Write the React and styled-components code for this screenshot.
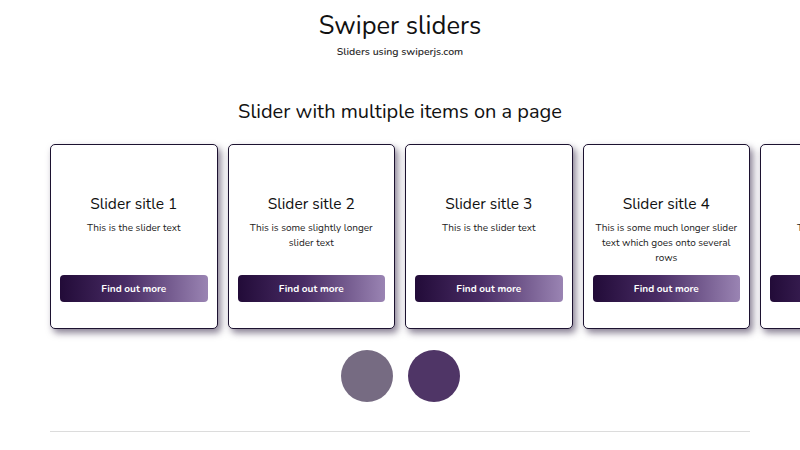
import React from 'react';
import styled, { createGlobalStyle } from 'styled-components';

const GlobalStyle = createGlobalStyle`
  html, body {
    margin: 0;
    padding: 0;
    background: #fff;
    overflow: hidden;
  }
  body {
    font-family: 'Nunito', 'Lato', 'Noto Sans', sans-serif;
    color: #111;
  }
`;

const Page = styled.div`
  width: 700px;
  margin: 0 auto;
  display: flex;
  flex-direction: column;
  align-items: center;
`;

const Title = styled.h1`
  margin: 11px 0 0;
  font-size: 25.5px;
  font-weight: 400;
  line-height: 30px;
`;

const Subtitle = styled.p`
  margin: 4px 0 0;
  font-size: 10.5px;
  font-weight: 600;
  color: #2b2b2b;
  line-height: 14px;
`;

const SectionTitle = styled.h2`
  margin: 40px 0 0;
  font-size: 20px;
  font-weight: 400;
  line-height: 26px;
`;

const Track = styled.div`
  align-self: stretch;
  display: flex;
  gap: 10px;
  margin-top: 19px;
`;

const Card = styled.div`
  flex: 0 0 167.5px;
  box-sizing: border-box;
  height: 185px;
  border: 1.5px solid #1c1230;
  border-radius: 5px;
  box-shadow: 3px 4px 7px rgba(40, 25, 60, 0.55);
  padding: 49px 9px 26px;
  display: flex;
  flex-direction: column;
  align-items: center;
  text-align: center;
  background: #fff;
`;

const CardTitle = styled.h3`
  margin: 0;
  font-size: 15.5px;
  font-weight: 400;
  line-height: 20px;
  color: #111;
`;

const CardText = styled.p`
  margin: 7px 0 0;
  font-size: 10px;
  line-height: 15px;
  color: #222;
`;

const Button = styled.button`
  margin-top: auto;
  width: 100%;
  height: 27px;
  border: none;
  border-radius: 4px;
  background: linear-gradient(90deg, #220b38 0%, #4a2d66 45%, #9a84b3 100%);
  color: #fff;
  font-family: inherit;
  font-size: 10px;
  font-weight: 700;
`;

const Dots = styled.div`
  display: flex;
  gap: 15px;
  margin-top: 21px;
`;

const Dot = styled.span`
  width: 52px;
  height: 52px;
  border-radius: 50%;
  background: ${p => (p.$active ? '#4f3566' : '#766b82')};
`;

const Rule = styled.hr`
  align-self: stretch;
  margin: 29px 0 0;
  border: none;
  border-top: 1.5px solid #dcdcdc;
`;

const slides = [
  { title: 'Slider sitle 1', text: 'This is the slider text' },
  { title: 'Slider sitle 2', text: 'This is some slightly longer slider text' },
  { title: 'Slider sitle 3', text: 'This is the slider text' },
  { title: 'Slider sitle 4', text: 'This is some much longer slider text which goes onto several rows' },
  { title: 'Slider sitle 5', text: 'This is the slider text' },
];

export default function App() {
  return (
    <>
      <GlobalStyle />
      <Page>
        <Title>Swiper sliders</Title>
        <Subtitle>Sliders using swiperjs.com</Subtitle>
        <SectionTitle>Slider with multiple items on a page</SectionTitle>
        <Track>
          {slides.map(s => (
            <Card key={s.title}>
              <CardTitle>{s.title}</CardTitle>
              <CardText>{s.text}</CardText>
              <Button>Find out more</Button>
            </Card>
          ))}
        </Track>
        <Dots>
          <Dot />
          <Dot $active />
        </Dots>
        <Rule />
      </Page>
    </>
  );
}
